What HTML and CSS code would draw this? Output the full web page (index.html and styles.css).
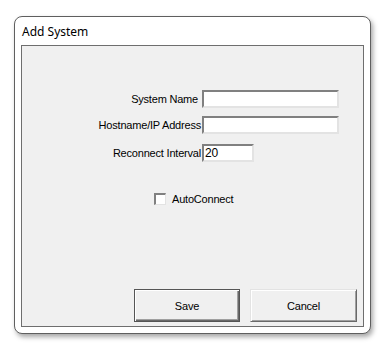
FILE: index.html
```html
<!DOCTYPE html>
<html>
<head>
<meta charset="utf-8">
<link rel="stylesheet" href="styles.css">
</head>
<body>
<div class="window">
  <div class="title">Add System</div>
  <div class="panel">
    <div class="form">
      <div class="row"><label class="lbl lbl-pad">System Name</label><div class="field wide"></div></div>
      <div class="row row2"><label class="lbl">Hostname/IP Address</label><div class="field wide"></div></div>
      <div class="row row3"><label class="lbl">Reconnect Interval</label><div class="field short">20</div></div>
    </div>
    <div class="check-row"><span class="box"></span><span class="check-label">AutoConnect</span></div>
    <div class="buttons">
      <div class="btn btn-default">Save</div>
      <div class="btn">Cancel</div>
    </div>
  </div>
</div>
</body>
</html>
```

FILE: styles.css
```css
html, body { margin: 0; padding: 0; background: #ffffff; }
body { width: 383px; height: 347px; overflow: hidden; font-family: "Liberation Sans", Arial, sans-serif; }
.window {
  box-sizing: border-box;
  margin: 16px 0 0 14px;
  width: 357px;
  height: 318px;
  background: #ffffff;
  border: 1px solid #5f5f5f;
  border-radius: 8px;
  box-shadow: 2px 3px 5px rgba(0,0,0,0.35);
  display: flex;
  flex-direction: column;
}
.title {
  height: 28px;
  box-sizing: border-box;
  padding: 6px 0 0 7px;
  font-family: "Noto Sans", "Open Sans", sans-serif;
  font-size: 12px;
  color: #000;
}
.panel {
  flex: 1;
  margin: 0 6px 6px 6px;
  background: #f0f0f0;
  border: 1px solid #6e6e6e;
  display: flex;
  flex-direction: column;
  font-size: 11px;
  letter-spacing: -0.2px;
  color: #000;
}
.form { padding-top: 44px; }
.row { display: flex; align-items: center; height: 18px; }
.row2 { margin-top: 8px; }
.row3 { margin-top: 10px; }
.lbl { width: 180px; text-align: right; padding-right: 1px; box-sizing: border-box; white-space: nowrap; }
.lbl-pad { padding-right: 4px; }
.field {
  box-sizing: border-box;
  height: 18px;
  background: #fff;
  border-top: 2px solid #808080;
  border-left: 2px solid #808080;
  border-bottom: 2px solid #e3e3e3;
  border-right: 2px solid #e3e3e3;
  font-size: 12px;
  line-height: 14px;
  padding-left: 1px;
}
.wide { width: 137px; }
.short { width: 52px; }
.check-row { display: flex; align-items: center; margin-top: 30px; padding-left: 132px; height: 13px; }
.box {
  box-sizing: border-box;
  width: 12px; height: 12px;
  background: #fff;
  border-top: 2px solid #808080;
  border-left: 2px solid #808080;
  border-bottom: 1px solid #e3e3e3;
  border-right: 1px solid #e3e3e3;
}
.check-label { margin-left: 6px; font-size: 11px; }
.buttons { margin-top: auto; display: flex; justify-content: flex-end; gap: 10px; padding: 0 6px 4px 0; }
.btn {
  box-sizing: border-box;
  width: 107px;
  height: 33px;
  background: #f0f0f0;
  display: flex; align-items: center; justify-content: center;
  font-size: 11px;
  border-top: 1px solid #e3e3e3;
  border-left: 1px solid #e3e3e3;
  border-right: 1px solid #696969;
  border-bottom: 1px solid #696969;
  box-shadow: inset 1px 1px #ffffff, inset -1px -1px #a0a0a0;
}
.btn-default {
  width: 106px;
  border: 1px solid #555;
  box-shadow: inset 1px 1px #ffffff, inset -1px -1px #696969, inset -2px -2px #a0a0a0;
}
```
